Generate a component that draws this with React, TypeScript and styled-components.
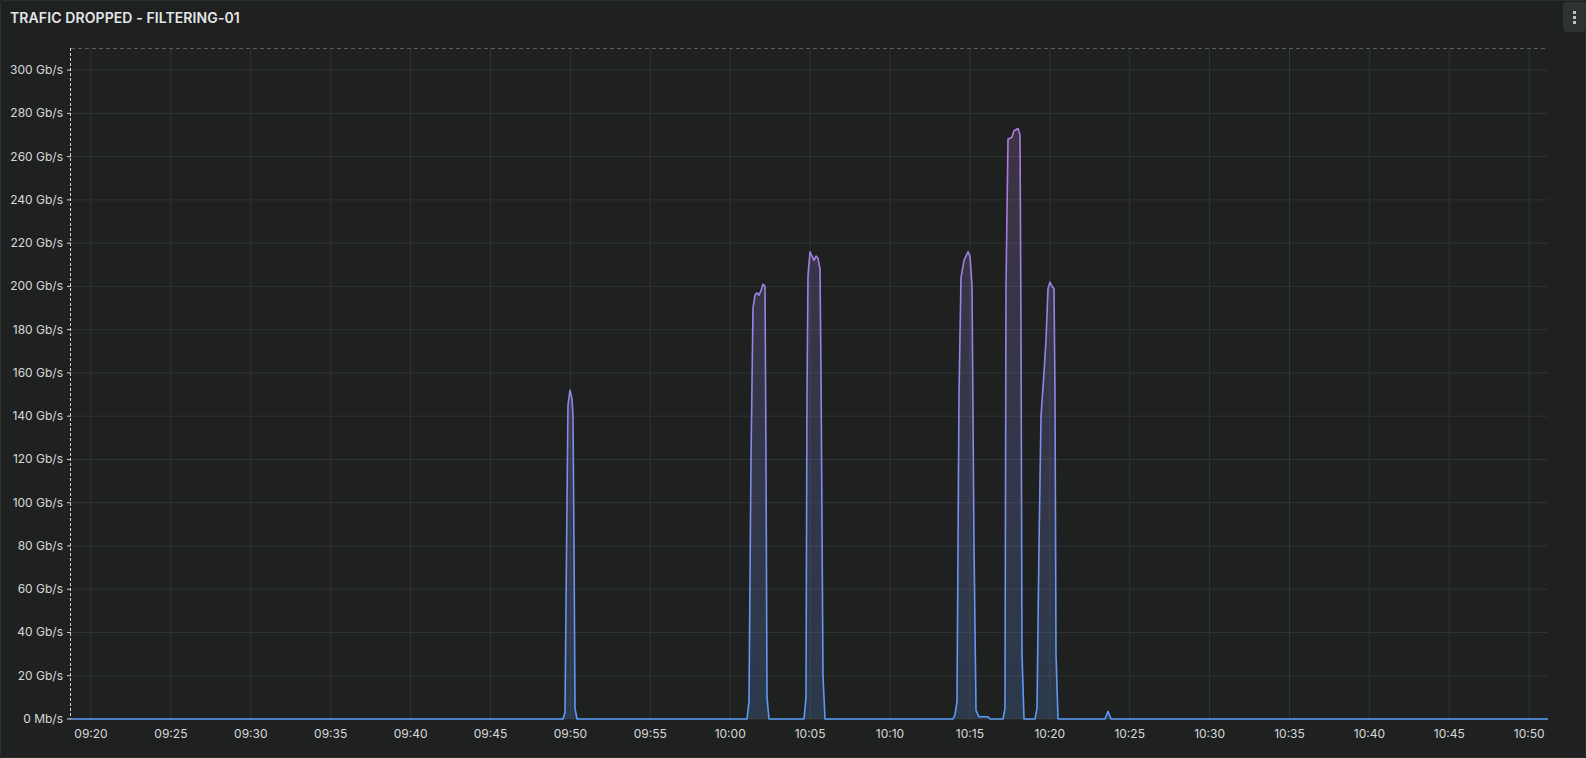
import React from "react";
import styled, { createGlobalStyle } from "styled-components";

const Global = createGlobalStyle`
  html, body { margin: 0; padding: 0; background: #181b1f; }
  body { font-family: Inter, "Noto Sans", sans-serif; }
`;

const Panel = styled.div`
  width: 1586px; height: 758px; box-sizing: border-box;
  background: #1f2120; border: 1px solid #2c2f30; border-radius: 3px;
  display: flex; flex-direction: column; overflow: hidden;
`;
const Header = styled.div`
  height: 38px; display: flex; align-items: flex-start; justify-content: space-between;
  padding: 8px 0 0 9px; box-sizing: border-box;
`;
const Title = styled.div`
  color: #e4e6e8; font-size: 14px; font-weight: 600; letter-spacing: 0.1px;
`;
const MenuBtn = styled.div`
  width: 22px; height: 30px; margin-top: -7px; background: #2e3231; border-radius: 4px 0 4px 4px;
  display: flex; flex-direction: column; align-items: center; justify-content: center; gap: 2px;
  span { width: 3px; height: 3px; background: #bfc2bf; display: block; }
`;
const Chart = styled.svg`
  display: block; flex: 1;
`;

const Y0 = 719, K = 2.163;
const y = (v: number) => Y0 - v * K;
const pts: [number, number][] = [
  [71,0],[563,0],[565,3],[567,100],[568,145],[570,152],[572,148],[573,140],[574,80],[575,5],[577,0],
  [747,0],[749,8],[751,120],[753,190],[755,196],[757,197],[759,196],[761,198],[763,201],[765,200],[766,120],[767,10],[769,0],
  [804,0],[806,10],[807,150],[808,205],[810,216],[812,214],[814,212],[816,214],[818,213],[820,208],[821,160],[823,20],[825,0],
  [953,0],[955,2],[957,8],[959,150],[961,204],[964,212],[968,216],[970,214],[972,200],[974,80],[976,4],[979,1],[988,1],[990,0],
  [1003,0],[1005,5],[1006,200],[1008,268],[1012,269],[1014,272],[1018,273],[1020,270],[1021,180],[1022,30],[1024,0],
  [1035,0],[1037,5],[1039,80],[1041,140],[1044,160],[1046,175],[1048,199],[1050,202],[1052,200],[1054,199],[1055,150],[1056,30],[1058,0],
  [1105,0],[1108,3.5],[1111,0],[1548,0],
];
const line = pts.map(([x, v], i) => `${i ? "L" : "M"}${x},${y(v).toFixed(1)}`).join(" ");
const area = `${line} L1548,${Y0} L71,${Y0} Z`;

const yTicks = Array.from({ length: 16 }, (_, i) => i * 20);
const xLabels = ["09:20","09:25","09:30","09:35","09:40","09:45","09:50","09:55","10:00","10:05","10:10","10:15","10:20","10:25","10:30","10:35","10:40","10:45","10:50"];
const xPos = (i: number) => 91 + i * 79.9;

export default function App() {
  return (
    <>
      <Global />
      <Panel>
        <Header>
          <Title>TRAFIC DROPPED - FILTERING-01</Title>
          <MenuBtn><span /><span /><span /></MenuBtn>
        </Header>
        <Chart viewBox="1 39 1584 718" width={1584} height={718}>
          <defs>
            <linearGradient id="lg" gradientUnits="userSpaceOnUse" x1="0" y1={Y0} x2="0" y2={y(290)}>
              <stop offset="0" stopColor="#5b9af5" />
              <stop offset="1" stopColor="#b877d9" />
            </linearGradient>
          </defs>
          {yTicks.map((v) => (
            <g key={v}>
              <line x1={71} x2={1548} y1={y(v)} y2={y(v)} stroke="#303333" strokeWidth={1} />
              <line x1={67} x2={71} y1={y(v)} y2={y(v)} stroke="#cfd1d3" strokeWidth={1} />
              <text x={63} y={y(v) + 4} textAnchor="end" fill="#d8d9da" fontSize={12} fontFamily="Inter, sans-serif">
                {v === 0 ? "0 Mb/s" : `${v} Gb/s`}
              </text>
            </g>
          ))}
          {xLabels.map((l, i) => (
            <g key={l}>
              <line x1={xPos(i)} x2={xPos(i)} y1={48} y2={Y0} stroke="#303333" strokeWidth={1} />
              <text x={xPos(i)} y={738} textAnchor="middle" fill="#d8d9da" fontSize={12} fontFamily="Inter, sans-serif">{l}</text>
            </g>
          ))}
          <line x1={71} x2={1548} y1={48.5} y2={48.5} stroke="#5a5d5d" strokeDasharray="4 3" />
          <line x1={70.5} x2={70.5} y1={48} y2={Y0} stroke="#d8d9da" strokeDasharray="3 2" />
          <path d={area} fill="url(#lg)" fillOpacity={0.2} />
          <path d={line} fill="none" stroke="url(#lg)" strokeWidth={1.6} strokeLinejoin="round" />
        </Chart>
      </Panel>
    </>
  );
}
